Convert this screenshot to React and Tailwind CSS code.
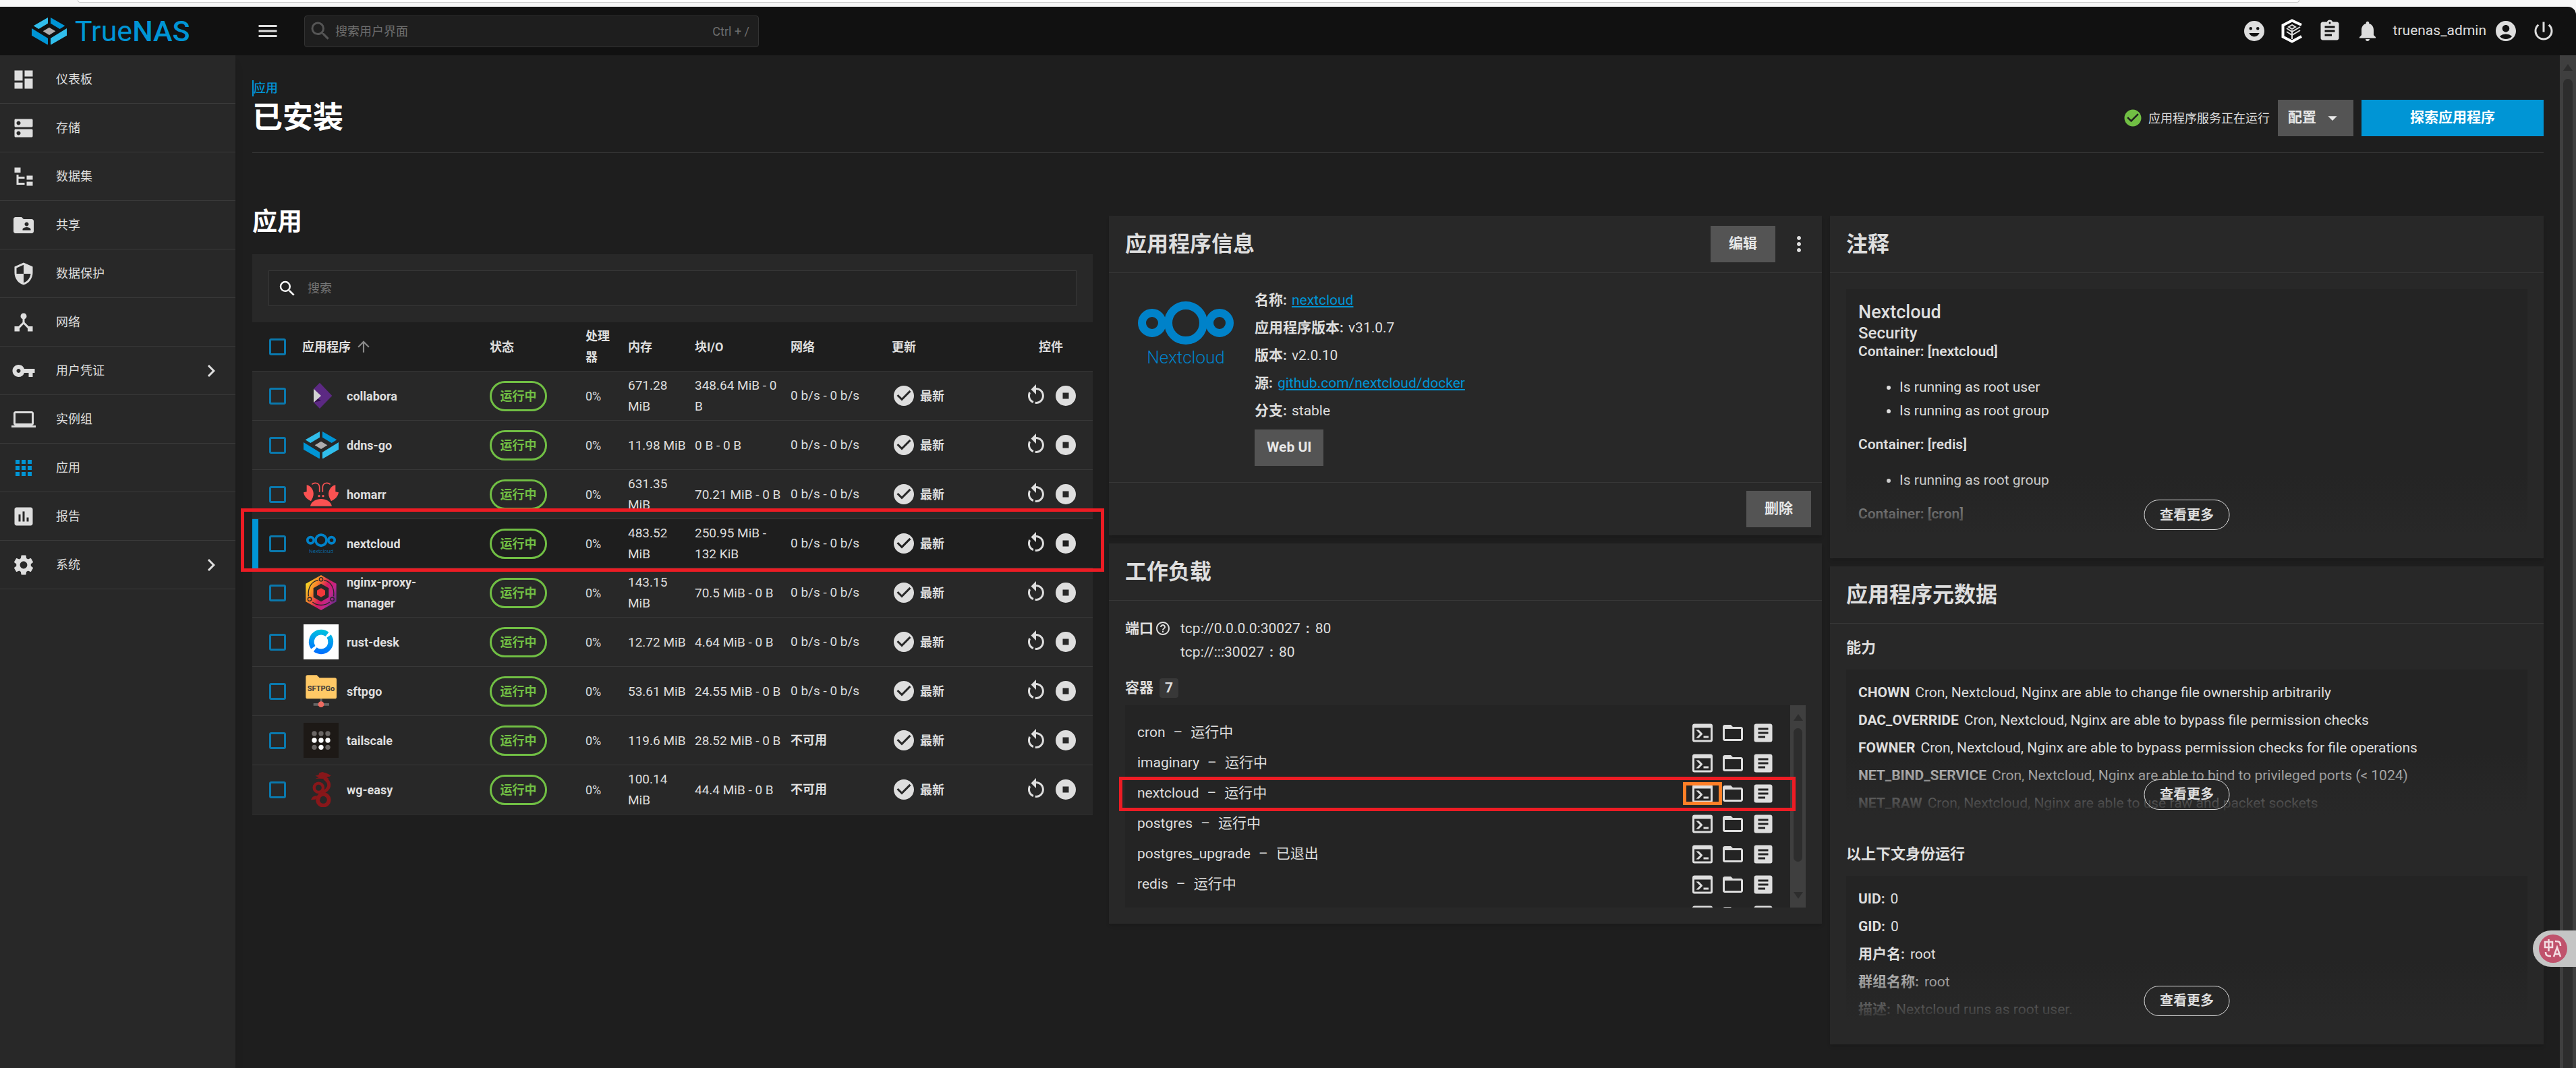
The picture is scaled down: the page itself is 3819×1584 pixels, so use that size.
import {
  MdAccountCircle, MdApps, MdArrowDropDown, MdArrowUpward, MdAssessment, MdAssignment, MdCheckCircle, MdChevronRight,
  MdDashboard, MdDeviceHub, MdDns, MdFolderOpen, MdFolderShared, MdHelpOutline, MdLaptop, MdMenu, MdMoreVert,
  MdNotifications, MdPowerSettingsNew, MdSearch, MdSecurity, MdSettings, MdVpnKey,
} from 'react-icons/md'

/* ---------- icons ---------- */

function Svg({ d, className = 'size-9' }) {
  return (
    <svg viewBox="0 0 24 24" fill="currentColor" className={className} aria-hidden="true">
      <path fillRule="evenodd" d={d} />
    </svg>
  )
}

const PATHS = {
  smile: 'M12 2a10 10 0 1 0 0 20 10 10 0 0 0 0-20M8.500 8a1.500 1.500 0 1 1 0 3 1.500 1.500 0 0 1 0-3m7 0a1.500 1.500 0 1 1 0 3 1.500 1.500 0 0 1 0-3M6.900 14h10.200c-.8 2-2.800 3.500-5.100 3.500S7.700 16 6.900 14',
  dataset: 'M3 3h6v5H3zM15 11h6v4h-6zM15 17h6v4h-6zM5 10h2v2h6v2H7v4h6v2H5z',
  restart: 'M12,4C14.1,4 16.1,4.8 17.6,6.3C20.7,9.4 20.7,14.5 17.6,17.6C15.8,19.5 13.3,20.2 10.9,19.9L11.4,17.9C13.1,18.1 14.9,17.5 16.2,16.2C18.5,13.9 18.5,10.1 16.2,7.7C15.1,6.6 13.5,6 12,6V10.6L7,5.6L12,0.6V4M6.3,17.6C3.7,15 3.3,11 5.1,7.9L6.6,9.4C5.5,11.6 5.9,14.4 7.8,16.2C8.3,16.7 8.9,17.1 9.6,17.4L9,19.4C8,19 7.1,18.4 6.3,17.6Z',
  stop: 'M12 2a10 10 0 1 0 0 20 10 10 0 0 0 0-20M9 9h6v6H9z',
  console: 'M20,19V7H4V19H20M20,3A2,2 0 0,1 22,5V19A2,2 0 0,1 20,21H4A2,2 0 0,1 2,19V5C2,3.89 2.9,3 4,3H20M13,17V15H18V17H13M9.58,13L5.57,9H8.4L11.7,12.3C12.09,12.69 12.09,13.33 11.7,13.72L8.42,17H5.59L9.58,13Z',
  logs: 'M14,17H7V15H14M17,13H7V11H17M17,9H7V7H17M19,3H5C3.89,3 3,3.89 3,5V19A2,2 0 0,0 5,21H19A2,2 0 0,0 21,19V5C21,3.89 20.1,3 19,3Z',
}

function TrueNasMark({ className }) {
  return (
    <svg viewBox="0 0 156 122" className={className} aria-hidden="true">
      <path fill="#31beec" d="M8 37 72 0v26L31 51zM156 48 84 92v30l72-42z" />
      <path fill="#0095d5" d="M84 0l64 37-23 14-41-25zM0 48l72 44v30L0 80z" />
      <path fill="#aeadae" d="M78 44l28 17-28 17-28-17z" />
    </svg>
  )
}

function TrueCommandMark() {
  return (
    <svg viewBox="0 0 32 36" fill="none" className="h-9 w-8" aria-hidden="true">
      <path d="M30 9 16 2.500 2.500 9.500v17L16 33.500l14-7.500" stroke="#fff" strokeWidth="4" />
      <path d="M16 30V17M8 14l8 5 12-7M8 19l8 5 12-7M16 9l-5 3 5 3 5-3z" stroke="#dedede" strokeWidth="2" />
    </svg>
  )
}

function NextcloudMark({ className }) {
  return (
    <svg viewBox="0 0 142 100" className={className} aria-hidden="true">
      <g fill="none" stroke="#0082c9" strokeWidth="12">
        <circle cx="21" cy="33" r="15" />
        <circle cx="71" cy="33" r="26" />
        <circle cx="121" cy="33" r="15" />
      </g>
      <text x="71" y="93" textAnchor="middle" fontSize="26" fontWeight="300" fill="#0082c9">Nextcloud</text>
    </svg>
  )
}

const APP_ICONS = {
  collabora: (
    <>
      <path fill="#5c2983" d="M72 20l55 58-55 57-27-28V47z" />
      <path fill="#311149" d="M58 88l20 12-33 7z" />
      <path fill="#d3d3d3" d="M45 47l33 31-33 30z" />
    </>
  ),
  homarr: (
    <g fill="#fa5252">
      <path d="M0 70l14-3V37c22 4 38 31 27 56l-8 16C15 100 3 89 0 70zM156 70l-14-3V37c-22 4-38 31-27 56l8 16c18-9 30-20 33-39zM30 131c8-43 88-43 96 0z" />
      <circle cx="69" cy="86" r="5" />
      <circle cx="87" cy="86" r="5" />
      <path fill="none" stroke="#fa5252" strokeWidth="5" d="M71 68V48c0-20-20-25-34-14M85 68V48c0-20 20-25 34-14" />
    </g>
  ),
  'nginx-proxy-manager': (
    <>
      <defs>
        <linearGradient id="npm" x1="0" y1="0.2" x2="1" y2="0.8">
          <stop offset="0" stopColor="#f5e526" />
          <stop offset="0.3" stopColor="#f7802a" />
          <stop offset="0.55" stopColor="#d81b60" />
          <stop offset="0.75" stopColor="#c2268b" />
          <stop offset="1" stopColor="#5b2d8a" />
        </linearGradient>
      </defs>
      <path fill="url(#npm)" d="M78 0l68 38v80l-68 38-68-38V38z" />
      <path fill="#282828" d="M78 38l34 20v40l-34 20-34-20V58z" />
      <path fill="#f2383a" d="M78 58l18 10v20L78 98 60 88V68z" />
      <g fill="none" stroke="#282828" strokeWidth="4">
        <path d="M66 22C36 28 18 54 22 94M90 22c30 6 48 32 44 72M40 120c22 18 54 18 76 0" />
        <circle cx="78" cy="19" r="8" />
        <circle cx="27" cy="107" r="8" />
        <circle cx="128" cy="107" r="8" />
      </g>
    </>
  ),
  'rust-desk': (
    <>
      <defs>
        <linearGradient id="rust" x1="0" y1="1" x2="1" y2="0">
          <stop offset="0.1" stopColor="#0071ff" />
          <stop offset="1" stopColor="#00c8dc" />
        </linearGradient>
      </defs>
      <path fill="#fff" d="M0 0h156v156H0z" />
      <circle cx="78" cy="78" r="43" fill="none" stroke="url(#rust)" strokeWidth="23" strokeDasharray="122 13" transform="rotate(-36 78 78)" />
    </>
  ),
  sftpgo: (
    <>
      <path fill="#656565" d="M74 108h9v26h-9zM44 132h70v11H44z" />
      <path fill="#ffc966" d="M18 7h41l12 12h68q8 0 8 8v77q0 8-8 8H18q-8 0-8-8V15q0-8 8-8z" />
      <circle cx="78" cy="137" r="13" fill="#ef6b61" />
      <text x="78" y="78" textAnchor="middle" fontSize="33" fontWeight="700" fill="#3b3b3b">SFTPGo</text>
    </>
  ),
  tailscale: (
    <>
      <path fill="#1d1916" d="M0 0h156v156H0z" />
      <g fill="#6b6765">
        <circle cx="48" cy="48" r="11" /><circle cx="78" cy="48" r="11" /><circle cx="108" cy="48" r="11" />
        <circle cx="48" cy="109" r="11" /><circle cx="108" cy="109" r="11" />
      </g>
      <g fill="#fff">
        <circle cx="48" cy="78" r="11" /><circle cx="78" cy="78" r="11" /><circle cx="108" cy="78" r="11" />
        <circle cx="78" cy="109" r="11" />
      </g>
    </>
  ),
  'wg-easy': (
    <g fill="#88171a">
      <path d="M70 4l14-4 18 5 20 10-6 5-14 2 10 8-14 12-10-12-24-1-12 2 16-8-16-6 15-4z" />
      <circle cx="67" cy="70" r="20" fill="none" stroke="#88171a" strokeWidth="13" />
      <path fill="none" stroke="#88171a" strokeWidth="15" d="M92 26c28 20 28 44 2 60-14 8-28 18-28 38" />
      <circle cx="88" cy="124" r="25" fill="none" stroke="#88171a" strokeWidth="17" />
      <path d="M33 124c4-14 14-20 28-18l-8 16z" />
    </g>
  ),
}

function AppIcon({ name }) {
  if (name === 'ddns-go') return <TrueNasMark className="w-[52px]" />
  if (name === 'nextcloud') return <span className="w-[52px] flex justify-center"><NextcloudMark className="w-11" /></span>
  return <svg viewBox="0 0 156 156" className="size-[52px] shrink-0" aria-hidden="true">{APP_ICONS[name]}</svg>
}

/* ---------- data ---------- */

const NAV = [
  { label: '仪表板', icon: <MdDashboard /> },
  { label: '存储', icon: <MdDns /> },
  { label: '数据集', icon: <Svg d={PATHS.dataset} /> },
  { label: '共享', icon: <MdFolderShared /> },
  { label: '数据保护', icon: <MdSecurity /> },
  { label: '网络', icon: <MdDeviceHub /> },
  { label: '用户凭证', icon: <MdVpnKey />, expandable: true },
  { label: '实例组', icon: <MdLaptop /> },
  { label: '应用', icon: <MdApps />, active: true },
  { label: '报告', icon: <MdAssessment /> },
  { label: '系统', icon: <MdSettings />, expandable: true },
]

const NET = '0 b/s - 0 b/s'

const APPS = [
  { name: 'collabora', mem: '671.28 MiB', io: '348.64 MiB - 0 B', net: NET },
  { name: 'ddns-go', mem: '11.98 MiB', io: '0 B - 0 B', net: NET },
  { name: 'homarr', mem: '631.35 MiB', io: '70.21 MiB - 0 B', net: NET },
  { name: 'nextcloud', mem: '483.52 MiB', io: '250.95 MiB - 132 KiB', net: NET, selected: true },
  { name: 'nginx-proxy-manager', mem: '143.15 MiB', io: '70.5 MiB - 0 B', net: NET },
  { name: 'rust-desk', mem: '12.72 MiB', io: '4.64 MiB - 0 B', net: NET },
  { name: 'sftpgo', mem: '53.61 MiB', io: '24.55 MiB - 0 B', net: NET },
  { name: 'tailscale', mem: '119.6 MiB', io: '28.52 MiB - 0 B' },
  { name: 'wg-easy', mem: '100.14 MiB', io: '44.4 MiB - 0 B' },
]

const CONTAINERS = [
  { name: 'cron', state: '运行中' },
  { name: 'imaginary', state: '运行中' },
  { name: 'nextcloud', state: '运行中', marked: true },
  { name: 'postgres', state: '运行中' },
  { name: 'postgres_upgrade', state: '已退出' },
  { name: 'redis', state: '运行中' },
]

const CAPABILITIES = [
  ['CHOWN', 'Cron, Nextcloud, Nginx are able to change file ownership arbitrarily'],
  ['DAC_OVERRIDE', 'Cron, Nextcloud, Nginx are able to bypass file permission checks'],
  ['FOWNER', 'Cron, Nextcloud, Nginx are able to bypass permission checks for file operations'],
  ['NET_BIND_SERVICE', 'Cron, Nextcloud, Nginx are able to bind to privileged ports (< 1024)'],
  ['NET_RAW', 'Cron, Nextcloud, Nginx are able to use raw and packet sockets'],
]

const RUN_AS = [
  ['UID:', '0'],
  ['GID:', '0'],
  ['用户名:', 'root'],
  ['群组名称:', 'root'],
  ['描述:', 'Nextcloud runs as root user.'],
]

/* ---------- shared pieces ---------- */

function Button({ children, className = '' }) {
  return (
    <button className={`h-[54px] bg-[#545454] text-[21px] font-bold text-[#e8e8e8] flex items-center justify-center ${className}`}>
      {children}
    </button>
  )
}

function Card({ title, actions, children }) {
  return (
    <section className="bg-[#282828] shadow-md">
      <header className="h-[85px] px-6 border-b border-[#383838] flex items-center justify-between">
        <h3 className="text-[32px] font-bold">{title}</h3>
        {actions}
      </header>
      {children}
    </section>
  )
}

function FadeBox({ className, children }) {
  return (
    <div className={`relative overflow-hidden bg-[#242424] px-[18px] ${className}`}>
      {children}
      <div className="absolute inset-x-0 bottom-0 h-[90px] bg-linear-to-b from-transparent to-[#282828]" />
      <button className="absolute bottom-2 left-1/2 -translate-x-1/2 w-[127px] h-[45px] rounded-full border border-[#e0e0e0] text-[20px] font-bold">
        查看更多
      </button>
    </div>
  )
}

function Checkbox({ label }) {
  return <input type="checkbox" aria-label={label} className="block size-[25px] ml-[25px] appearance-none rounded-[3px] border-[3px] border-[#0a79ae]" />
}

function Arrow({ down }) {
  return (
    <svg viewBox="0 0 14 10" className="w-[14px] h-[10px] fill-[#2d2d2d]" aria-hidden="true">
      <path d={down ? 'M0 0h14L7 10z' : 'M0 10h14L7 0z'} />
    </svg>
  )
}

/* ---------- page parts ---------- */

function TopBar() {
  return (
    <header className="h-[72px] bg-[#111111] rounded-tr-xl flex items-center">
      <a href="#home" className="w-[349px] pl-[47px] flex items-center gap-3 text-[#0095d5]">
        <TrueNasMark className="w-[52px]" />
        <span className="text-[43px] leading-none">True<span className="font-medium">NAS</span></span>
      </a>
      <button className="ml-[30px]" aria-label="菜单"><MdMenu className="size-9" /></button>
      <label className="ml-9 w-[674px] h-[47px] px-[5px] bg-[#1e1e1e] border border-[#333333] rounded-sm flex items-center text-[18px] text-[#6e6e6e]">
        <MdSearch className="size-9 text-[#555555]" />
        <input type="text" placeholder="搜索用户界面" className="flex-1 ml-1 bg-transparent placeholder:text-[#6e6e6e]" />
        <span className="mr-2">Ctrl + /</span>
      </label>
      <div className="ml-auto pr-[30px] flex items-center gap-5">
        <button aria-label="反馈"><Svg d={PATHS.smile} /></button>
        <button aria-label="TrueCommand" className="px-0.5"><TrueCommandMark /></button>
        <button aria-label="任务"><MdAssignment className="size-9" /></button>
        <button aria-label="通知"><MdNotifications className="size-9" /></button>
        <button className="flex items-center gap-[11px] text-[21px]">
          truenas_admin <MdAccountCircle className="size-9" />
        </button>
        <button aria-label="电源"><MdPowerSettingsNew className="size-9" /></button>
      </div>
    </header>
  )
}

function Sidebar() {
  return (
    <nav className="w-[349px] shrink-0 bg-[#282828] shadow-lg">
      {NAV.map((item) => (
        <a key={item.label} href="#nav" className="h-[72px] pl-[17px] pr-[18px] border-b border-[#3a3a3a] flex items-center text-[18px]">
          <span className={`text-[36px] ${item.active ? 'text-[#0095d5]' : ''}`}>{item.icon}</span>
          <span className="ml-[30px] flex-1">{item.label}</span>
          {item.expandable && <MdChevronRight className="size-9" />}
        </a>
      ))}
    </nav>
  )
}

function AppsTable() {
  return (
    <table className="w-full table-fixed text-left text-[18px] border-separate border-spacing-0">
      <colgroup>
        <col className="w-[74px]" />
        <col />
        <col className="w-[142px]" />
        <col className="w-[63px]" />
        <col className="w-[99px]" />
        <col className="w-[142px]" />
        <col className="w-[150px]" />
        <col className="w-[150px]" />
        <col className="w-[148px]" />
      </colgroup>
      <thead>
        <tr className="h-[73px] *:border-b *:border-[#383838] *:pr-3">
          <th><Checkbox label="全选" /></th>
          <th><span className="flex items-center gap-1.5">应用程序 <MdArrowUpward className="size-[26px] text-[#8a8a8a]" /></span></th>
          <th>状态</th>
          <th className="leading-[31px]">处理器</th>
          <th>内存</th>
          <th>块I/O</th>
          <th>网络</th>
          <th>更新</th>
          <th className="text-right"><span className="mr-8">控件</span></th>
        </tr>
      </thead>
      <tbody>
        {APPS.map((app) => (
          <tr key={app.name} className={`relative h-[73px] *:border-b *:border-[#383838] *:pr-3 ${app.selected ? 'bg-[#1e1e1e]' : 'bg-[#282828]'}`}>
            <td>
              <Checkbox label={app.name} />
              {app.selected && (
                <>
                  <span className="absolute left-0 inset-y-0 w-[9px] bg-[#0095d5]" />
                  <span className="absolute z-10 -inset-x-[17px] -top-4 -bottom-[5px] border-[5px] border-[#ed1c24] pointer-events-none" />
                </>
              )}
            </td>
            <td>
              <div className="flex items-center gap-3 pl-0.5">
                <AppIcon name={app.name} />
                <span className="max-w-[130px] leading-[31px] font-bold">{app.name}</span>
              </div>
            </td>
            <td>
              <span className="w-[85px] h-[45px] rounded-full border-[3px] border-[#71bf44] text-[#71bf44] flex items-center justify-center font-bold">运行中</span>
            </td>
            <td>0%</td>
            <td className="text-[19px] leading-[31px]">{app.mem}</td>
            <td className="text-[19px] leading-[31px]">{app.io}</td>
            <td className="text-[19px]">{app.net || <b className="text-[18px]">不可用</b>}</td>
            <td>
              <span className="flex items-center gap-1.5 font-bold"><MdCheckCircle className="size-9" /> 最新</span>
            </td>
            <td>
              <div className="flex justify-end gap-2 pr-[10px]">
                <button aria-label="重启"><Svg d={PATHS.restart} /></button>
                <button aria-label="停止"><Svg d={PATHS.stop} /></button>
              </div>
            </td>
          </tr>
        ))}
      </tbody>
    </table>
  )
}

function AppInfo() {
  return (
    <Card
      title="应用程序信息"
      actions={
        <div className="flex items-center gap-[17px] -mr-2">
          <Button className="w-24">编辑</Button>
          <button aria-label="更多"><MdMoreVert className="size-9" /></button>
        </div>
      }
    >
      <div className="flex px-6 pt-5 pb-6">
        <div className="w-48 pl-[19px] pt-[21px]"><NextcloudMark className="w-[142px]" /></div>
        <div>
          <dl className="text-[21px] leading-[41px] [&_div]:flex [&_div]:gap-[7px] [&_dt]:font-bold">
            <div><dt>名称:</dt><dd><a href="#app" className="text-[#0095d5] underline">nextcloud</a></dd></div>
            <div><dt>应用程序版本:</dt><dd>v31.0.7</dd></div>
            <div><dt>版本:</dt><dd>v2.0.10</dd></div>
            <div><dt>源:</dt><dd><a href="#source" className="text-[#0095d5] underline">github.com/nextcloud/docker</a></dd></div>
            <div><dt>分支:</dt><dd>stable</dd></div>
          </dl>
          <Button className="mt-[7px] px-[18px]">Web UI</Button>
        </div>
      </div>
      <footer className="h-[79px] px-4 border-t border-[#383838] flex items-center justify-end">
        <Button className="w-24">删除</Button>
      </footer>
    </Card>
  )
}

function ContainerActions({ marked }) {
  return (
    <div className="flex gap-[9px]">
      <button aria-label="Shell" className="relative">
        <Svg d={PATHS.console} />
        {marked && <span className="absolute -inset-x-[11px] inset-y-px border-[5px] border-[#ff7f27]" />}
      </button>
      <button aria-label="卷"><MdFolderOpen className="size-9" /></button>
      <button aria-label="日志"><Svg d={PATHS.logs} /></button>
    </div>
  )
}

function Workloads() {
  return (
    <Card title="工作负载">
      <div className="p-6 text-[21px]">
        <div className="flex leading-[35px]">
          <strong>端口</strong>
          <MdHelpOutline className="size-6 mt-[5px] ml-0.5 mr-[14px]" />
          <ul>
            <li>tcp://0.0.0.0:30027<b className="mx-2">:</b>80</li>
            <li>tcp://:::30027<b className="mx-2">:</b>80</li>
          </ul>
        </div>
        <div className="mt-[21px] flex items-center gap-[9px] leading-[29px] font-bold">
          容器 <span className="w-7 rounded-sm bg-[#383838] text-center">7</span>
        </div>
        <div className="relative mt-[11px] h-[300px] flex">
          <ul className="flex-1 overflow-hidden bg-[#242424] pt-[18px] pl-[18px] pr-[22px]">
            {CONTAINERS.map((c) => (
              <li key={c.name} className="h-[45px] flex items-center justify-between">
                <span>{c.name}<span className="mx-3">–</span>{c.state}</span>
                <ContainerActions marked={c.marked} />
              </li>
            ))}
            <li className="h-[45px] flex items-center justify-end"><ContainerActions /></li>
          </ul>
          <div className="w-[23px] py-[13px] bg-[#3f3f3f] flex flex-col items-center">
            <Arrow />
            <div className="my-[11px] w-[13px] h-[198px] rounded-full bg-[#2d2d2d]" />
            <span className="mt-auto"><Arrow down /></span>
          </div>
          {/* highlight over the nextcloud row */}
          <span className="absolute -left-[9px] right-[15px] top-[106px] h-[51px] border-[5px] border-[#ed1c24] pointer-events-none" />
        </div>
      </div>
    </Card>
  )
}

function Notes() {
  const heading = 'text-[21px] leading-6 font-semibold'
  const list = 'mt-6 mb-5 pl-[61px] list-disc text-[21px] leading-[35px]'
  return (
    <Card title="注释">
      <div className="px-6 pt-6 pb-[34px]">
        <FadeBox className="h-[365px] pt-[18px]">
          <h1 className="text-[27px] leading-[33px] font-medium">Nextcloud</h1>
          <h2 className="text-[24px] leading-[29px] font-medium">Security</h2>
          <h3 className={heading}>Container: [nextcloud]</h3>
          <ul className={list}>
            <li>Is running as root user</li>
            <li>Is running as root group</li>
          </ul>
          <h3 className={heading}>Container: [redis]</h3>
          <ul className={list}>
            <li>Is running as root group</li>
          </ul>
          <h3 className={heading}>Container: [cron]</h3>
        </FadeBox>
      </div>
    </Card>
  )
}

function Metadata() {
  return (
    <Card title="应用程序元数据">
      <div className="px-6 pt-5 pb-[34px]">
        {[['能力', CAPABILITIES], ['以上下文身份运行', RUN_AS]].map(([title, rows], i) => (
          <div key={title} className={i > 0 ? 'mt-[42px]' : ''}>
            <h4 className="mb-4 text-[22px] leading-8 font-bold">{title}</h4>
            <FadeBox className="h-[216px] pt-[14px] text-[21px] leading-[41px]">
              {rows.map(([name, text]) => (
                <p key={name}><strong className="mr-2">{name}</strong>{text}</p>
              ))}
            </FadeBox>
          </div>
        ))}
      </div>
    </Card>
  )
}

function TranslateTab() {
  return (
    <button aria-label="翻译" className="fixed right-0 bottom-[150px] w-16 h-[54px] pl-2 rounded-l-full bg-[#c5c5c5] flex items-center">
      <svg viewBox="0 0 44 44" fill="none" stroke="#f3dde2" strokeWidth="2.500" className="size-11" aria-hidden="true">
        <circle cx="22" cy="22" r="21" fill="#c0526c" stroke="none" />
        <path d="M10 12h11v8H10zM15.500 8v18M11 27c0 5 2 6 8 6M25 11c6 0 8 1 8 7M23 34l5-14 5 14M25 30h7" />
      </svg>
    </button>
  )
}

export default function App() {
  return (
    <div className="min-h-screen flex flex-col bg-[#f7f7f7] text-[#dedede] font-['Roboto','Noto_Sans_CJK_SC',sans-serif]">
      <div className="h-[10px] pl-[115px] pr-[410px]">
        <div className="h-1 bg-white border-b border-x border-[#cccccc] rounded-b-md" />
      </div>
      <TopBar />
      <div className="flex-1 flex bg-[#1e1e1e]">
        <Sidebar />
        <main className="flex-1 pl-[25px] pr-6 pt-[37px]">
          <a href="#apps" className="block w-fit border-l-2 border-[#0095d5] h-6 leading-6 text-[18px] font-medium text-[#0095d5]">应用</a>
          <div className="mt-0.5 pb-[21px] border-b border-[#383838] flex items-center justify-between">
            <h1 className="text-[45px] leading-[60px] font-bold text-white">已安装</h1>
            <div className="flex items-center gap-3">
              <span className="flex items-center gap-2 text-[18px]">
                <MdCheckCircle className="size-[30px] text-[#71bf44]" />
                应用程序服务正在运行
              </span>
              <Button className="w-28 gap-2">配置 <MdArrowDropDown className="size-8" /></Button>
              <button className="w-[270px] h-[54px] bg-[#0095d5] text-[21px] font-bold text-white">探索应用程序</button>
            </div>
          </div>

          <div className="mt-[73px] grid grid-cols-[1258fr_1057fr_1058fr] gap-3 items-start">
            <div className="mr-3">
              <h2 className="mb-[17px] text-[37px] leading-[60px] font-bold text-white">应用</h2>
              <div className="bg-[#282828] p-6">
                <label className="h-[53px] px-3 border border-[#383838] bg-[#242424] flex items-center">
                  <MdSearch className="size-[30px] text-white" />
                  <input type="text" placeholder="搜索" className="ml-[15px] flex-1 bg-transparent text-[18px] placeholder:text-[#757575]" />
                </label>
              </div>
              <AppsTable />
            </div>
            <div className="pt-5 flex flex-col gap-3">
              <AppInfo />
              <Workloads />
            </div>
            <div className="pt-5 flex flex-col gap-3">
              <Notes />
              <Metadata />
            </div>
          </div>
        </main>
        <div className="w-6 pt-[13px] bg-[#3f3f3f] flex flex-col items-center">
          <Arrow />
          <div className="mt-3 flex-1 w-[14px] rounded-t-full bg-[#2d2d2d]" />
        </div>
      </div>
      <TranslateTab />
    </div>
  )
}
